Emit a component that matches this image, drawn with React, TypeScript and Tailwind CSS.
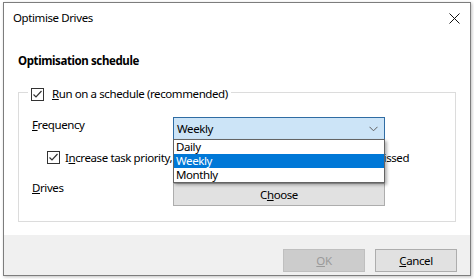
import React from 'react'

const font = { fontFamily: '"Noto Sans", "Open Sans", sans-serif' }

function Check() {
  return (
    <span className="w-[13px] h-[13px] border border-[#333333] bg-white flex items-center justify-center shrink-0">
      <svg width="11" height="11" viewBox="0 0 11 11" fill="none">
        <path d="M1.5 5.5 L4 8 L9.5 2" stroke="#333333" strokeWidth="1.2" />
      </svg>
    </span>
  )
}

export default function App() {
  return (
    <div className="w-[474px] h-[279px] bg-white pl-[3px] pt-[2px] text-[11.5px] tracking-[-0.4px] text-black leading-[16px]" style={font}>
      <div className="w-[468px] h-[274px] border border-[#7d7d7d] flex flex-col shadow-[1px_1px_3px_rgba(0,0,0,0.25)]">
        {/* Title bar */}
        <div className="h-[30px] shrink-0 flex items-center justify-between pl-[9px] pr-[9px] bg-white">
          <span>Optimise Drives</span>
          <svg width="11" height="11" viewBox="0 0 11 11" className="mr-[1px]">
            <path d="M0.5 0.5 L10.5 10.5 M10.5 0.5 L0.5 10.5" stroke="#111111" strokeWidth="1" />
          </svg>
        </div>

        {/* Body */}
        <div className="flex-1 bg-white px-[14px] pt-[20px]">
          <p className="font-bold">Optimisation schedule</p>

          <div className="relative mt-[23px] h-[130px] border border-[#dcdcdc] pl-[13px] pt-[24px]">
            {/* legend */}
            <div className="absolute -top-[7px] left-[9px] bg-white px-[3px] flex items-center gap-[8px]">
              <Check />
              <span>
                <u>R</u>un on a schedule (recommended)
              </span>
            </div>

            {/* Frequency row */}
            <div className="flex items-start">
              <span className="w-[141px]">
                <u>F</u>requency
              </span>
              <div className="relative">
                <div className="w-[212px] h-[23px] bg-[#cce4f7] border border-[#2f6ca3] flex items-center justify-between pl-[3px] pr-[6px]">
                  <span>Weekly</span>
                  <svg width="9" height="6" viewBox="0 0 9 6" fill="none">
                    <path d="M0.5 0.8 L4.5 4.8 L8.5 0.8" stroke="#606060" strokeWidth="1" />
                  </svg>
                </div>
                {/* dropdown list */}
                <div className="absolute left-0 top-[22px] z-10 w-[212px] bg-white border border-[#646464] shadow-[2px_2px_3px_rgba(0,0,0,0.3)] flex flex-col">
                  <div className="h-[14px] pl-[2px] flex items-center">Daily</div>
                  <div className="h-[14px] pl-[2px] flex items-center bg-[#0078d7] text-white">Weekly</div>
                  <div className="h-[14px] pl-[2px] flex items-center">Monthly</div>
                </div>
              </div>
            </div>

            {/* priority row */}
            <div className="mt-[11px] h-[13px] pl-[15px] flex items-center gap-[5px] whitespace-nowrap">
              <Check />
              <span>
                I<u>n</u>crease task priority, if three consecutive scheduled runs are missed
              </span>
            </div>

            {/* Drives row */}
            <div className="mt-[19px] flex items-start">
              <span className="w-[141px] -mt-[3px]">
                <u>D</u>rives
              </span>
              <div className="w-[212px] h-[23px] bg-[#e1e1e1] border border-[#adadad] flex items-center justify-center">
                <span>
                  C<u>h</u>oose
                </span>
              </div>
            </div>
          </div>
        </div>

        {/* Footer */}
        <div className="h-[40px] shrink-0 bg-[#f0f0f0] flex justify-end items-start gap-[10px] pr-[13px] pt-[14px]">
          <div className="w-[82px] h-[23px] bg-[#cccccc] border border-[#bfbfbf] flex items-center justify-center text-[#9a9a9a]">
            <span>
              <u>O</u>K
            </span>
          </div>
          <div className="w-[82px] h-[23px] bg-[#e1e1e1] border border-[#adadad] flex items-center justify-center">
            <span>
              <u>C</u>ancel
            </span>
          </div>
        </div>
      </div>
    </div>
  )
}
